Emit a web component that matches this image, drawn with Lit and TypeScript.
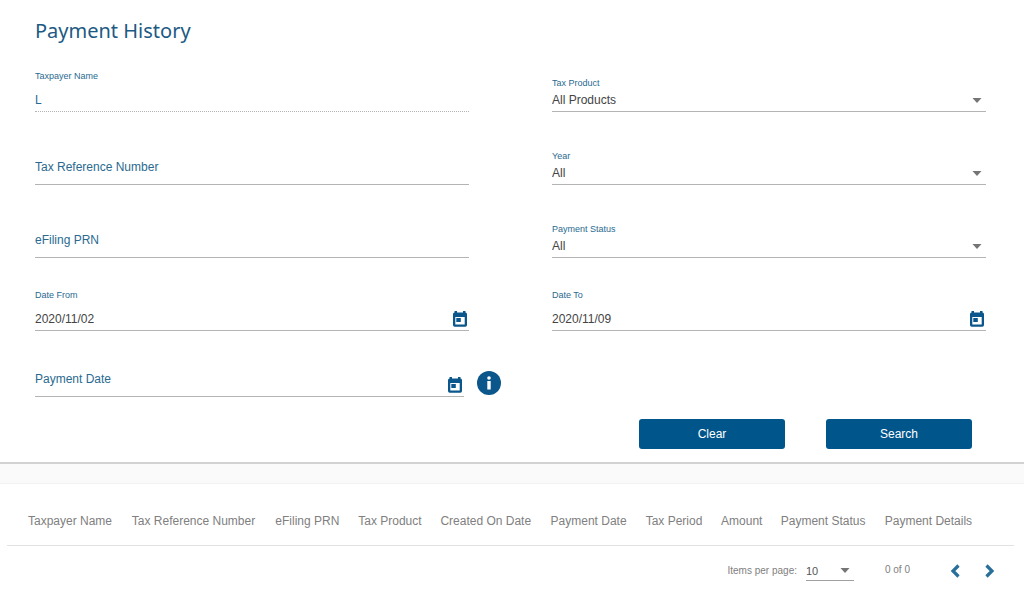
import { LitElement, html, css, svg } from "lit";
import { customElement } from "lit/decorators.js";

const calendarIcon = svg`
  <svg class="icon" viewBox="0 0 16 18" width="16" height="18" aria-hidden="true">
    <path fill="currentColor" fill-rule="evenodd"
      d="M2.500 1h2.500v1.500h6V1h2.500v1.500A1.700 1.700 0 0 1 15 4.200V15a1.700 1.700 0 0 1-1.700 1.700H2.700A1.700 1.700 0 0 1 1 15V4.200A1.700 1.700 0 0 1 2.500 2.500zM3.300 7v7.500h9.400V7z" />
    <path fill="currentColor" d="M4.300 8h4.500v4H4.300z" />
  </svg>`;

const arrowIcon = svg`
  <svg class="arrow" viewBox="0 0 10 5" width="10" height="5" aria-hidden="true">
    <path fill="currentColor" d="M0.500 0h9L5 5z" />
  </svg>`;

const columns = [
  "Taxpayer Name",
  "Tax Reference Number",
  "eFiling PRN",
  "Tax Product",
  "Created On Date",
  "Payment Date",
  "Tax Period",
  "Amount",
  "Payment Status",
  "Payment Details",
];

@customElement("app-root")
export class AppRoot extends LitElement {
  static styles = css`
    :host {
      display: block;
      min-height: 100vh;
      background: #fff;
      color: #444;
      font: 12px/16px "Liberation Sans", Arial, sans-serif;
    }
    * {
      box-sizing: border-box;
    }
    input,
    select,
    button {
      margin: 0;
      padding: 0;
      border: 0;
      background: none;
      color: inherit;
      font: inherit;
      outline-offset: 2px;
    }
    button {
      cursor: pointer;
    }
    svg {
      display: block;
    }
    .search {
      padding: 16px 38px 13px 35px;
      border-bottom: 2px solid #d2d2d2;
    }
    h1 {
      margin: 0 0 24px;
      color: #1c5a84;
      font: 400 20px/30px "Noto Sans", "Open Sans", sans-serif;
    }
    .fields {
      display: grid;
      grid-template-columns: 1fr 1fr;
      gap: 31px 83px;
    }
    .field {
      display: flex;
      flex-direction: column;
      justify-content: flex-end;
      gap: 8px;
      min-height: 42px;
      padding-bottom: 1px;
      border-bottom: 1px solid #b4b4b4;
    }
    .field.tight {
      gap: 1px;
    }
    .field.locked {
      border-bottom-style: dotted;
    }
    .field.locked input {
      color: #2a6a90;
    }
    .field label {
      color: #2a6a90;
      font-size: 9px;
      line-height: 12px;
    }
    .control {
      display: flex;
      align-items: center;
      height: 20px;
    }
    .control input {
      flex: 1;
      min-width: 0;
      height: 20px;
    }
    .field.empty {
      display: grid;
      justify-content: stretch;
    }
    .empty label,
    .empty .control {
      grid-area: 1 / 1;
    }
    .field.empty label {
      align-self: start;
      padding-top: 16px;
      font-size: 12px;
      line-height: 16px;
      pointer-events: none;
    }
    .empty .control {
      align-self: end;
    }
    .pick {
      padding-right: 1px;
      color: #0b568a;
    }
    .select {
      display: grid;
      align-items: center;
    }
    .select select {
      grid-area: 1 / 1;
      width: 100%;
      height: 20px;
      appearance: none;
    }
    .arrow {
      grid-area: 1 / 1;
      justify-self: end;
      margin-right: 4px;
      color: #757575;
      pointer-events: none;
    }
    .payment {
      display: grid;
      grid-template-columns: 1fr 1fr;
      column-gap: 83px;
      margin-top: 24px;
    }
    .with-info {
      display: flex;
      gap: 13px;
      margin-right: -32px;
    }
    .with-info .field {
      flex: 1;
    }
    .info {
      align-self: flex-end;
      margin-bottom: 2px;
      color: #0b568a;
    }
    .actions {
      display: flex;
      justify-content: flex-end;
      gap: 41px;
      margin-top: 22px;
      padding-right: 14px;
    }
    .action {
      width: 146px;
      height: 30px;
      border-radius: 3px;
      background: #00558b;
      color: #fff;
    }
    .band {
      height: 20px;
      border-bottom: 1px solid #f2f2f2;
      background: #fafafa;
    }
    .results {
      padding: 13px 10px 0 7px;
      color: #808080;
    }
    table {
      width: 100%;
      border-collapse: collapse;
    }
    th {
      height: 48px;
      padding: 0 17px 0 0;
      border-bottom: 1px solid #e2e2e2;
      font-weight: 400;
      text-align: left;
      white-space: nowrap;
    }
    th:first-child {
      padding-left: 21px;
    }
    th:last-child {
      padding-right: 39px;
    }
    .pager {
      display: flex;
      justify-content: flex-end;
      align-items: center;
      padding: 16px 18px 0 0;
      font-size: 10px;
    }
    .size {
      width: 48px;
      margin: 0 31px 0 9px;
      border-bottom: 1px solid #a0a0a0;
      color: #555;
      font-size: 11px;
    }
    .size select {
      height: 18px;
    }
    .range {
      margin-right: 39px;
      padding-bottom: 2px;
    }
    .turn {
      color: #2a6f9b;
    }
    .turn + .turn {
      margin-left: 21px;
    }
  `;

  private text(id: string, label: string, value = "", cls = "") {
    return html`
      <div class="field ${cls}">
        <label for=${id}>${label}</label>
        <div class="control">
          <input id=${id} type="text" .value=${value} ?readonly=${cls === "locked"} />
        </div>
      </div>`;
  }

  private date(id: string, label: string, value = "") {
    return html`
      <div class="field ${value ? "" : "empty"}">
        <label for=${id}>${label}</label>
        <div class="control">
          <input id=${id} type="text" .value=${value} />
          <button class="pick" type="button" aria-label="${label} calendar">${calendarIcon}</button>
        </div>
      </div>`;
  }

  private choice(id: string, label: string, value: string) {
    return html`
      <div class="field tight">
        <label for=${id}>${label}</label>
        <div class="select">
          <select id=${id}><option>${value}</option></select>
          ${arrowIcon}
        </div>
      </div>`;
  }

  render() {
    return html`
      <form class="search" @submit=${(e: Event) => e.preventDefault()}>
        <h1>Payment History</h1>
        <div class="fields">
          ${this.text("name", "Taxpayer Name", "L", "locked")}
          ${this.choice("product", "Tax Product", "All Products")}
          ${this.text("reference", "Tax Reference Number", "", "empty")}
          ${this.choice("year", "Year", "All")}
          ${this.text("prn", "eFiling PRN", "", "empty")}
          ${this.choice("status", "Payment Status", "All")}
          ${this.date("from", "Date From", "2020/11/02")}
          ${this.date("to", "Date To", "2020/11/09")}
        </div>
        <div class="payment">
          <div class="with-info">
            ${this.date("paid", "Payment Date")}
            <button class="info" type="button" aria-label="Information">
              <svg viewBox="0 0 24 24" width="24" height="24" aria-hidden="true">
                <circle cx="12" cy="12" r="12" fill="currentColor" />
                <circle cx="12" cy="7" r="1.800" fill="#fff" />
                <path fill="#fff" d="M10.300 10h3.400v8.500h-3.400z" />
              </svg>
            </button>
          </div>
        </div>
        <div class="actions">
          <button class="action" type="reset">Clear</button>
          <button class="action" type="submit">Search</button>
        </div>
      </form>
      <div class="band"></div>
      <section class="results">
        <table>
          <thead>
            <tr>${columns.map((c) => html`<th scope="col">${c}</th>`)}</tr>
          </thead>
        </table>
        <div class="pager">
          <label for="size">Items per page:</label>
          <div class="select size">
            <select id="size"><option>10</option></select>
            ${arrowIcon}
          </div>
          <span class="range">0 of 0</span>
          <button class="turn" type="button" aria-label="Previous page">
            <svg viewBox="0 0 13 16" width="13" height="16" aria-hidden="true">
              <path d="M9.500 2.500L4 8l5.500 5.500" fill="none" stroke="currentColor" stroke-width="3.200" />
            </svg>
          </button>
          <button class="turn" type="button" aria-label="Next page">
            <svg viewBox="0 0 13 16" width="13" height="16" aria-hidden="true">
              <path d="M3.500 2.500L9 8l-5.500 5.500" fill="none" stroke="currentColor" stroke-width="3.200" />
            </svg>
          </button>
        </div>
      </section>
    `;
  }
}
